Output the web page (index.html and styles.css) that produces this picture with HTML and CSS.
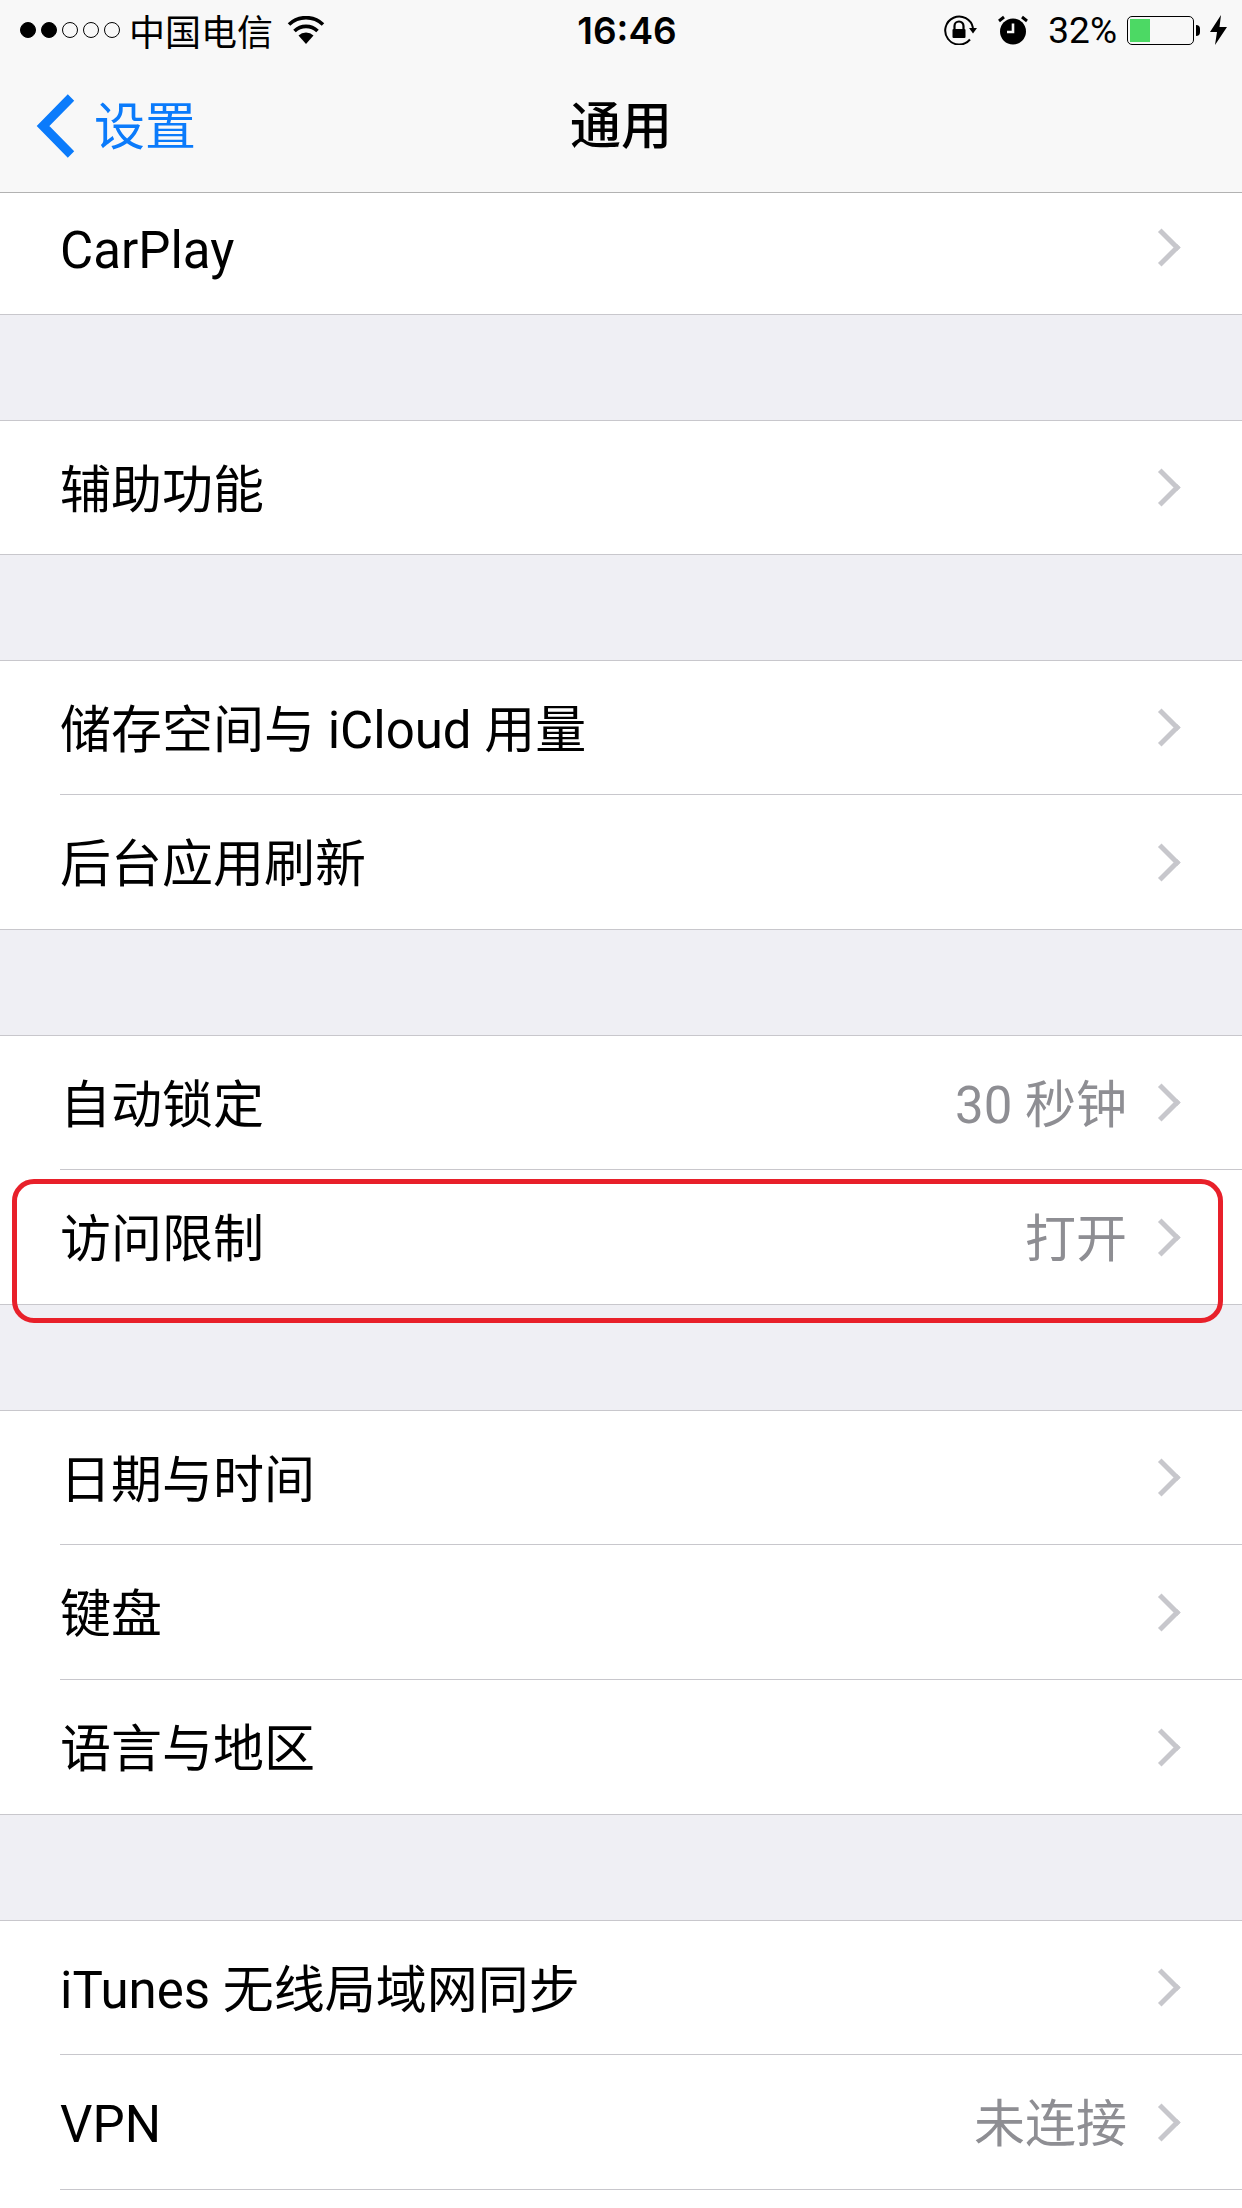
FILE: index.html
```html
<!DOCTYPE html>
<html lang="zh-CN">
<head>
    <meta charset="UTF-8">
    <title>通用</title>
    <link rel="stylesheet" href="styles.css">
</head>
<body>
<div class="page">

    <div class="topbar">
        <div class="status">
            <div class="status-left">
                <span class="dot on"></span><span class="dot on"></span><span class="dot"></span><span class="dot"></span><span class="dot"></span>
                <span class="carrier">中国电信</span>
                <svg class="wifi" width="38" height="28" viewBox="0 0 38 28">
                    <path d="M19 28 L11.5 19.5 A11 11 0 0 1 26.5 19.5 Z" fill="#000"/>
                    <path d="M7.5 15 A16.5 16.5 0 0 1 30.5 15" fill="none" stroke="#000" stroke-width="3.6"/>
                    <path d="M2 8.5 A24.5 24.5 0 0 1 36 8.5" fill="none" stroke="#000" stroke-width="3.6"/>
                </svg>
            </div>
            <div class="time">16:46</div>
            <div class="status-right">
                <svg class="rotlock" width="36" height="30" viewBox="0 0 36 30">
                    <path d="M27 24.500 A14 14 0 1 1 30 13" fill="none" stroke="#000" stroke-width="2"/>
                    <path d="M26 13 H34 L30 18.500 Z" fill="#000"/>
                    <rect x="9.500" y="14" width="13" height="9" rx="1" fill="#000"/>
                    <path d="M11.500 14 V11 A4.500 4.500 0 0 1 20.500 11 V14" fill="none" stroke="#000" stroke-width="2.200"/>
                </svg>
                <svg class="alarm" width="30" height="30" viewBox="0 0 30 30">
                    <circle cx="15" cy="16.500" r="13" fill="#000"/>
                    <path d="M1 6 L6 2 M29 6 L24 2" stroke="#000" stroke-width="3"/>
                    <path d="M15 8.500 V17 H9" fill="none" stroke="#f8f8f8" stroke-width="2.600"/>
                </svg>
                <span class="percent">32%</span>
                <div class="battery"><div class="battery-fill"></div></div>
                <div class="battery-nub"></div>
                <svg class="bolt" width="17" height="30" viewBox="0 0 17 30">
                    <path d="M11 0 L0 17 H7 L5 30 L17 12 H9.500 Z" fill="#000"/>
                </svg>
            </div>
        </div>
        <div class="nav">
            <div class="back">
                <svg class="back-arrow" width="40" height="64" viewBox="0 0 40 64">
                    <polyline points="35,3.500 7,32 35,60.500" fill="none" stroke="#0b7bfb" stroke-width="9"/>
                </svg>
                <span class="back-text">设置</span>
            </div>
            <div class="title">通用</div>
        </div>
    </div>

    <div class="group scrolled">
        <div class="row"><span class="label">CarPlay</span><span class="chev"></span></div>
    </div>

    <div class="group">
        <div class="row"><span class="label">辅助功能</span><span class="chev"></span></div>
    </div>

    <div class="group">
        <div class="row"><span class="label">储存空间与 iCloud 用量</span><span class="chev"></span></div>
        <div class="row"><span class="label">后台应用刷新</span><span class="chev"></span></div>
    </div>

    <div class="group">
        <div class="row"><span class="label">自动锁定</span><span class="value">30 秒钟</span><span class="chev"></span></div>
        <div class="row highlighted"><span class="label">访问限制</span><span class="value">打开</span><span class="chev"></span></div>
    </div>

    <div class="group">
        <div class="row"><span class="label">日期与时间</span><span class="chev"></span></div>
        <div class="row"><span class="label">键盘</span><span class="chev"></span></div>
        <div class="row"><span class="label">语言与地区</span><span class="chev"></span></div>
    </div>

    <div class="group">
        <div class="row"><span class="label">iTunes 无线局域网同步</span><span class="chev"></span></div>
        <div class="row"><span class="label">VPN</span><span class="value">未连接</span><span class="chev"></span></div>
        <div class="row"></div>
    </div>

</div>
</body>
</html>
```

FILE: styles.css
```css
* {
    box-sizing: border-box;
}
body {
    margin: 0;
    font-family: Roboto, "Noto Sans CJK SC", sans-serif;
    color: #000;
}
.page {
    width: 1242px;
    height: 2208px;
    overflow: hidden;
    background-color: #efeff4;
}

/* status bar + nav */
.topbar {
    position: relative;
    z-index: 2;
    height: 193px;
    background-color: #f8f8f8;
    border-bottom: 1px solid #b2b2b2;
}
.status {
    display: grid;
    grid-template-columns: 1fr auto 1fr;
    align-items: center;
    height: 60px;
    padding: 0 15px 0 20px;
}
.status-left, .status-right {
    display: flex;
    align-items: center;
}
.status-right {
    justify-content: flex-end;
}
.dot {
    width: 16px;
    height: 16px;
    margin-right: 5px;
    border: 1px solid #000;
    border-radius: 50%;
}
.dot.on {
    background-color: #000;
}
.carrier {
    margin-left: 4px;
    font-size: 36px;
}
.wifi {
    margin-left: 14px;
}
.time {
    margin-left: 7px;
    font-family: Inter, sans-serif;
    font-size: 37px;
    font-weight: 600;
}
.rotlock {
    margin-right: 19px;
}
.alarm {
    margin-right: 20px;
}
.percent {
    font-size: 37px;
    margin-right: 10px;
}
.battery {
    width: 67px;
    height: 29px;
    padding: 2px;
    border: 1px solid #000;
    border-radius: 5px;
}
.battery-fill {
    width: 20px;
    height: 100%;
    background-color: #4cd964;
}
.battery-nub {
    width: 4px;
    height: 11px;
    margin-left: 2px;
    margin-right: 10px;
    background-color: #000;
    border-radius: 0 4px 4px 0;
}
.nav {
    position: relative;
    display: flex;
    justify-content: center;
    align-items: center;
    height: 132px;
}
.back {
    position: absolute;
    left: 36px;
    top: 0;
    bottom: 0;
    display: flex;
    align-items: center;
    gap: 18px;
    font-size: 51px;
    color: #0b7bfb;
}
.back-text {
    padding-bottom: 6px;
}
.title {
    font-size: 51px;
    font-weight: 500;
    margin-top: -9px;
}

/* list */
.group {
    margin-top: 105px;
    background-color: #fff;
    border-top: 1px solid #c8c7cc;
}
.group.scrolled {
    margin-top: -12px;
    border-top: none;
}
.row {
    position: relative;
    display: flex;
    align-items: center;
    height: 135px;
    margin-left: 60px;
    padding-right: 63px;
    border-bottom: 1px solid #c8c7cc;
}
.row:first-child {
    height: 134px;
}
.row:last-child {
    margin-left: 0;
    padding-left: 60px;
}
.label, .value {
    padding-top: 6px;
    font-size: 51px;
    line-height: 60px;
}
.label {
    flex: 1;
}
.value {
    margin-right: 21px;
    color: #8e8e93;
}
.chev {
    width: 27px;
    height: 27px;
    margin-right: 4px;
    border-top: 5px solid #c7c7cc;
    border-right: 5px solid #c7c7cc;
    transform: rotate(45deg);
}
.highlighted::after {
    content: "";
    box-sizing: border-box;
    position: absolute;
    left: 12px;
    right: 19px;
    top: 9px;
    height: 144px;
    border: 5px solid #e8202a;
    border-radius: 22px;
    z-index: 1;
}
```
